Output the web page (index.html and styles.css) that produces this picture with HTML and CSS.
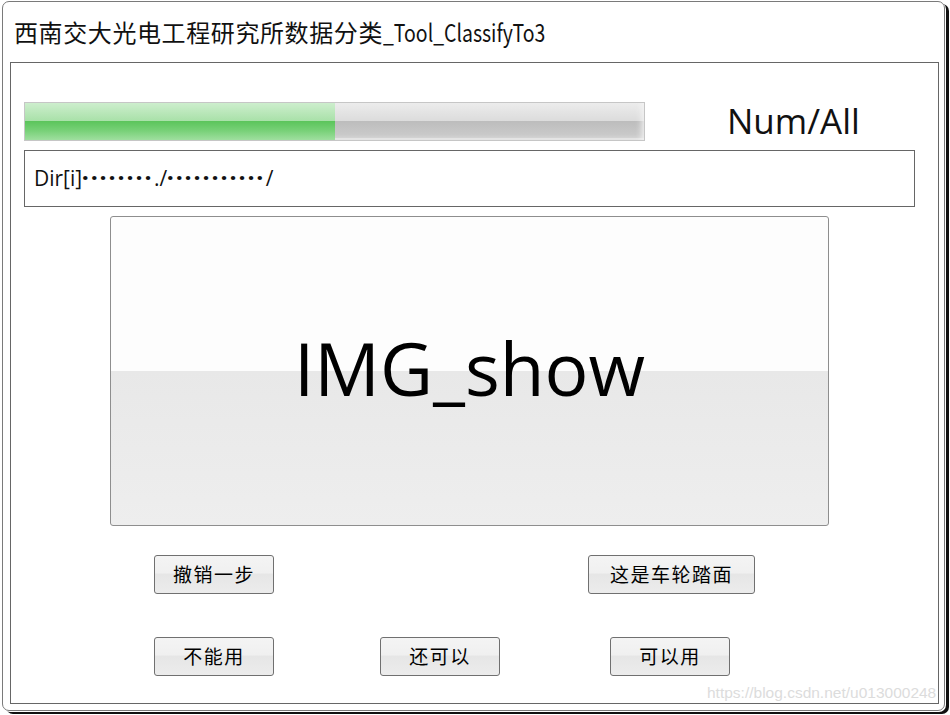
FILE: index.html
```html
<!DOCTYPE html>
<html lang="zh">
<head>
<meta charset="utf-8">
<title>Tool_ClassifyTo3</title>
<link rel="stylesheet" href="styles.css">
</head>
<body>
<div class="window">
  <div class="titlebar"><span class="title-cjk">西南交大光电工程研究所数据分类</span><span class="title-latin">_Tool_ClassifyTo3</span></div>
  <div class="panel">
    <div class="top-row">
      <div class="progress"><div class="progress-fill" style="width: 50%"></div></div>
      <div class="count">Num/All</div>
    </div>
    <div class="dir-box"><span>Dir[i]</span><span class="dots">········</span><span>./</span><span class="dots">···········</span><span>/</span></div>
    <div class="img-box"><span class="img-text">IMG_show</span></div>
    <div class="btn-row row-one">
      <button class="btn btn-undo">撤销一步</button>
      <button class="btn btn-wide btn-tread">这是车轮踏面</button>
    </div>
    <div class="btn-row row-two">
      <button class="btn btn-bad">不能用</button>
      <button class="btn btn-ok">还可以</button>
      <button class="btn btn-good">可以用</button>
    </div>
  </div>
</div>
<div class="watermark">https://blog.csdn.net/u013000248</div>
</body>
</html>
```

FILE: styles.css
```css
html, body {
  margin: 0;
  padding: 0;
  background: #ffffff;
}

body {
  position: relative;
  width: 950px;
  height: 715px;
  overflow: hidden;
  font-family: "Noto Sans CJK SC", "Noto Sans", sans-serif;
}

.window {
  margin: 1px 0 0 2px;
  width: 941px;
  height: 708px;
  border: 1px solid #7a7a7a;
  border-radius: 7px;
  background: #ffffff;
  box-shadow: 1px 1px 0 0 #ffffff, 4px 3px 0 0 #111111;
  display: flex;
  flex-direction: column;
}

.titlebar {
  height: 60px;
  display: flex;
  align-items: center;
  padding-left: 11px;
  padding-bottom: 2px;
  box-sizing: border-box;
  color: #111111;
  white-space: nowrap;
}

.title-cjk {
  font-family: "Noto Sans CJK SC", sans-serif;
  font-size: 24px;
  letter-spacing: 0.6px;
}

.title-latin {
  font-family: "Noto Sans CJK SC", sans-serif;
  font-size: 24px;
  display: inline-block;
  transform: scaleX(0.81);
  transform-origin: left center;
}

.panel {
  margin: 0 5px 6px 7px;
  height: 642px;
  border: 1px solid #666666;
  box-sizing: border-box;
  padding: 39px 0 0 13px;
  display: flex;
  flex-direction: column;
}

.top-row {
  display: flex;
  align-items: center;
  height: 39px;
}

.progress {
  width: 621px;
  height: 39px;
  box-sizing: border-box;
  border: 1px solid #c6c6c6;
  background: linear-gradient(to bottom, #ececec 0%, #dcdcdc 48%, #bdbdbd 50%, #c9c9c9 85%, #d9d9d9 100%);
  box-shadow: inset -8px 0 6px -6px #f4f4f4, inset 0 -2px 0 #e4e4e4;
}

.progress-fill {
  height: 100%;
  background: linear-gradient(to bottom, #cdeecd 0%, #a9e1a9 48%, #5cc55c 50%, #78d178 75%, #9fdf9f 100%);
}

.count {
  margin-left: 82px;
  font-family: "Open Sans", sans-serif;
  font-size: 35px;
  color: #111111;
  line-height: 39px;
  margin-top: -3px;
}

.dir-box {
  margin-top: 9px;
  width: 891px;
  height: 57px;
  box-sizing: border-box;
  border: 1px solid #666666;
  display: flex;
  align-items: center;
  padding: 0 0 2px 9px;
  font-family: "Open Sans", sans-serif;
  font-size: 21px;
  color: #111111;
}

.dots {
  font-weight: 800;
  letter-spacing: 2.9px;
}

.img-box {
  margin: 9px 0 0 86px;
  width: 719px;
  height: 310px;
  box-sizing: border-box;
  border: 1px solid #8e8e8e;
  border-radius: 3px;
  background: linear-gradient(to bottom, #fdfdfd 0%, #fdfdfd 50%, #e8e8e8 50%, #eeeeee 100%);
  display: flex;
  align-items: center;
  justify-content: center;
}

.img-text {
  font-family: "Open Sans", sans-serif;
  font-size: 73px;
  color: #000000;
  margin-top: -7px;
  margin-left: 0;
}

.btn-row {
  display: flex;
}

.row-one {
  margin-top: 29px;
}

.row-two {
  margin-top: 43px;
}

.btn {
  width: 120px;
  height: 39px;
  box-sizing: border-box;
  border: 1px solid #707070;
  border-radius: 3px;
  background: linear-gradient(to bottom, #f4f4f4 0%, #f0f0f0 45%, #e6e6e6 50%, #ececec 100%);
  font-family: "Noto Sans CJK SC", sans-serif;
  font-size: 19px;
  letter-spacing: 1.5px;
  color: #000000;
  padding: 0 0 3px 0;
  display: flex;
  align-items: center;
  justify-content: center;
}

.btn-wide {
  width: 167px;
}

.btn-undo {
  margin-left: 130px;
}

.btn-tread {
  margin-left: 314px;
}

.btn-bad {
  margin-left: 130px;
}

.btn-ok {
  margin-left: 106px;
}

.btn-good {
  margin-left: 110px;
}

.watermark {
  position: absolute;
  left: 707px;
  top: 684px;
  font-family: "Liberation Sans", sans-serif;
  font-size: 15.5px;
  color: #dcdcdc;
  text-shadow: 0 0 1px #ffffff;
  white-space: nowrap;
}
```
